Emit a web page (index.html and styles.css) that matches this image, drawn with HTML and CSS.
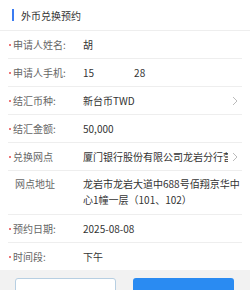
FILE: index.html
```html
<!DOCTYPE html>
<html lang="zh-CN">
<head>
<meta charset="utf-8">
<link rel="stylesheet" href="styles.css">
</head>
<body>
<div class="page">
  <div class="header"><span class="bar"></span><span class="title">外币兑换预约</span></div>
  <div class="form">
    <div class="row"><div class="label"><span class="dot"></span>申请人姓名:</div><div class="value">胡</div></div>
    <div class="row"><div class="label"><span class="dot"></span>申请人手机:</div><div class="value">15<span class="gap"></span>28</div></div>
    <div class="row"><div class="label"><span class="dot"></span>结汇币种:</div><div class="value">新台币TWD</div><svg class="arrow" width="6" height="10" viewBox="0 0 6 10"><path d="M1 1l4 4-4 4" fill="none" stroke="#bbb" stroke-width="1"/></svg></div>
    <div class="row"><div class="label"><span class="dot"></span>结汇金额:</div><div class="value">50,000</div></div>
    <div class="row"><div class="label"><span class="dot"></span>兑换网点</div><div class="value clip">厦门银行股份有限公司龙岩分行营业部</div><svg class="arrow" width="6" height="10" viewBox="0 0 6 10"><path d="M1 1l4 4-4 4" fill="none" stroke="#bbb" stroke-width="1"/></svg></div>
    <div class="row tall"><div class="label plain">网点地址</div><div class="value wrap">龙岩市龙岩大道中688号佰翔京华中心1幢一层（101、102）</div></div>
    <div class="row"><div class="label"><span class="dot"></span>预约日期:</div><div class="value">2025-08-08</div></div>
    <div class="row last"><div class="label"><span class="dot"></span>时间段:</div><div class="value">下午</div></div>
  </div>
  <div class="footer">
    <div class="btn ghost"></div>
    <div class="btn primary"></div>
  </div>
</div>
</body>
</html>
```
FILE: styles.css
```css
html, body {
  margin: 0;
  padding: 0;
  background: #fff;
}
body {
  width: 250px;
  font-family: "Noto Sans CJK SC", "Noto Sans", sans-serif;
  font-size: 10px;
  color: #333;
}
.header {
  height: 30px;
  display: flex;
  align-items: center;
  padding-left: 12px;
  border-bottom: 1px solid #eee;
}
.bar {
  width: 2px;
  height: 12px;
  background: #3b7cf2;
  margin-right: 7px;
}
.title {
  font-size: 10px;
  color: #333;
}
.form {
  padding: 0 8px;
}
.row {
  display: flex;
  align-items: center;
  height: 27px;
  border-bottom: 1px solid #eee;
}
.row.last {
  border-bottom: none;
}
.row.tall {
  height: auto;
  align-items: flex-start;
  padding: 5px 0 6px;
}
.label {
  width: 75px;
  flex: none;
  display: flex;
  align-items: center;
  color: #666;
  padding-left: 1px;
  box-sizing: border-box;
  line-height: 16px;
}
.label.plain {
  padding-left: 7px;
}
.dot {
  width: 2px;
  height: 2px;
  border-radius: 50%;
  background: #e84a4a;
  margin-right: 2px;
}
.value {
  flex: 1;
  color: #333;
  line-height: 16px;
  white-space: nowrap;
}
.value.clip {
  flex: none;
  width: 145px;
  overflow: hidden;
}
.value.wrap {
  white-space: normal;
}
.gap {
  display: inline-block;
  width: 40px;
}
.arrow {
  margin-left: auto;
  margin-right: 4px;
}
.footer {
  background: #f2f2f2;
  display: flex;
  gap: 17px;
  padding: 8px 16px 0 15px;
  height: 30px;
}
.btn {
  width: 101px;
  height: 30px;
  border-radius: 3px;
  box-sizing: border-box;
}
.btn.ghost {
  background: #fff;
  border: 1px solid #b7cfe2;
}
.btn.primary {
  background: #2a8bf2;
}
```
